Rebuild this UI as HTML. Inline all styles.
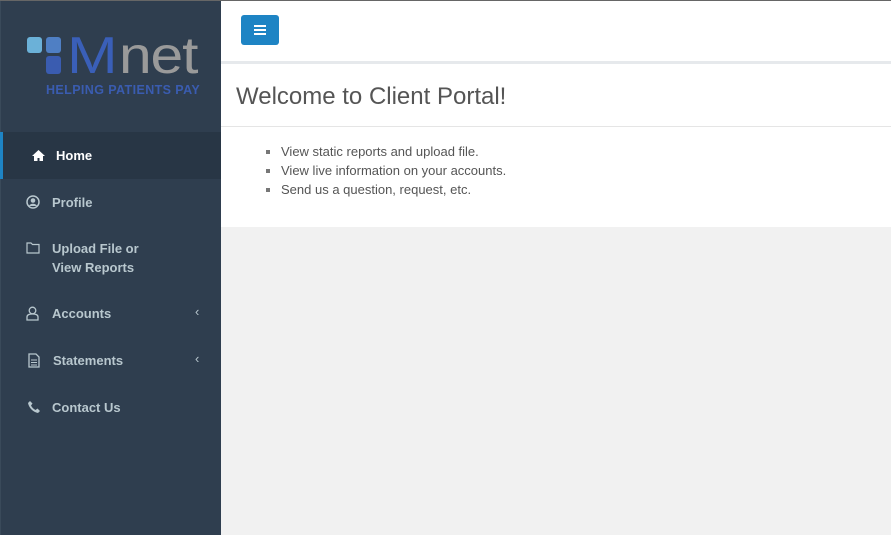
<!DOCTYPE html>
<html><head><meta charset="utf-8"><style>
*{margin:0;padding:0;box-sizing:border-box}
body{width:891px;height:535px;overflow:hidden;font-family:"Liberation Sans",Arial,sans-serif;background:#f1f1f1;position:relative}
.top{position:absolute;left:0;top:0;width:891px;height:1px;background:#666}
.side{position:absolute;left:0;top:1px;width:221px;height:534px;background:#2f3e4f;border-left:1px solid #3a4a5a}
.logo{position:absolute;left:0;top:0;width:221px;height:115px}
.sq{position:absolute;border-radius:3px}
.M{position:absolute;left:66px;top:25px;font-size:52px;color:#3a5fb8;transform:scaleX(1.17);transform-origin:0 0}
.net{position:absolute;left:118px;top:25px;font-size:52px;color:#9a9a9a;transform:scaleX(1.13);transform-origin:0 0;letter-spacing:-1px}
.tag{position:absolute;left:45px;top:82px;font-size:12.5px;color:#3a5cb0;letter-spacing:0.4px;font-weight:bold}
.item{position:absolute;left:0;width:221px;color:#b8c7ce;font-weight:bold;font-size:13px}
.item svg{position:absolute;left:26px}
.item .t{position:absolute;left:52px}
.home{top:132px;height:47px;background:#283645;border-left:3px solid #1e84c4}
.chev{position:absolute;left:195px;font-weight:normal;font-size:13px}
.hdr{position:absolute;left:221px;top:1px;width:670px;height:60px;background:#fff}
.bar{position:absolute;left:221px;top:61px;width:670px;height:3px;background:#e6e9ec}
.btn{position:absolute;left:241px;top:15px;width:38px;height:30px;background:#1e84c4;border-radius:3px}
.btn i{position:absolute;left:13px;width:12px;height:2px;background:#fff}
.content{position:absolute;left:221px;top:64px;width:670px;height:163px;background:#fff}
h1{position:absolute;left:15px;top:19px;font-size:24px;font-weight:normal;color:#555}
.hr{position:absolute;left:0;top:62px;width:670px;height:1px;background:#e5e5e5}
ul{position:absolute;left:60px;top:78px;list-style:square;font-size:13px;color:#555;line-height:19px}
ul li::marker{color:#777}
</style></head><body>
<div class="top"></div>
<div class="side">
 <div class="logo">
  <div class="sq" style="left:26px;top:36px;width:15px;height:16px;background:#6bb1d8"></div>
  <div class="sq" style="left:45px;top:36px;width:15px;height:16px;background:#4f7fc4"></div>
  <div class="sq" style="left:45px;top:55px;width:15px;height:18px;background:#3a5cb0"></div>
  <div class="M">M</div><div class="net">net</div>
  <div class="tag">HELPING PATIENTS PAY</div>
 </div>
</div>
<div class="item home" style="color:#fff"><svg style="left:29px;top:18px" width="13" height="11" viewBox="0 0 13 11"><path d="M6.5 0L0 6h2v5h3.5V8h2v3H11V6h2z" fill="#fff"/></svg><span class="t" style="left:53px;top:16px">Home</span></div>
<div class="item" style="top:179px;height:47px"><svg style="top:16px" width="14" height="14" viewBox="0 0 14 14"><circle cx="7" cy="7" r="6" fill="none" stroke="#b8c7ce" stroke-width="1.5"/><circle cx="7" cy="5.5" r="2.3" fill="#b8c7ce"/><path d="M3 11c1-3 7-3 8 0" fill="#b8c7ce"/></svg><span class="t" style="top:16px">Profile</span></div>
<div class="item" style="top:226px;height:66px"><svg style="top:16px" width="14" height="12" viewBox="0 0 14 12"><path d="M1 1h4l1.5 1.5H13V11H1z" fill="none" stroke="#b8c7ce" stroke-width="1.2"/></svg><span class="t" style="top:13px;line-height:19px">Upload File or<br>View Reports</span></div>
<div class="item" style="top:292px;height:47px"><svg style="top:14px" width="13" height="15" viewBox="0 0 13 15"><circle cx="6.5" cy="4.5" r="3.3" fill="none" stroke="#b8c7ce" stroke-width="1.3"/><path d="M1 14V11c0-2 2-3 5.5-3S12 9 12 11v3z" fill="none" stroke="#b8c7ce" stroke-width="1.3"/></svg><span class="t" style="top:14px">Accounts</span><span class="chev" style="top:12px">&lsaquo;</span></div>
<div class="item" style="top:339px;height:47px"><svg style="left:28px;top:14px" width="12" height="15" viewBox="0 0 12 15"><path d="M1 1h7l3 3v10H1z" fill="none" stroke="#b8c7ce" stroke-width="1.3"/><path d="M3 7h6M3 9.5h6M3 12h6" stroke="#b8c7ce"/></svg><span class="t" style="left:53px;top:14px">Statements</span><span class="chev" style="top:12px">&lsaquo;</span></div>
<div class="item" style="top:386px;height:47px"><svg style="left:28px;top:15px" width="12" height="12" viewBox="0 0 12 12"><path d="M2 0l2.5 2.5-1.5 2c1 2 2.5 3.5 4.5 4.5l2-1.5L12 10l-2 2C5 11 1 7 0 2z" fill="#b8c7ce"/></svg><span class="t" style="top:14px">Contact Us</span></div>
<div class="hdr"></div><div class="bar"></div>
<div class="btn"><i style="top:10px"></i><i style="top:14px"></i><i style="top:18px"></i></div>
<div class="content">
 <h1>Welcome to Client Portal!</h1>
 <div class="hr"></div>
 <ul><li>View static reports and upload file.</li><li>View live information on your accounts.</li><li>Send us a question, request, etc.</li></ul>
</div>
</body></html>
